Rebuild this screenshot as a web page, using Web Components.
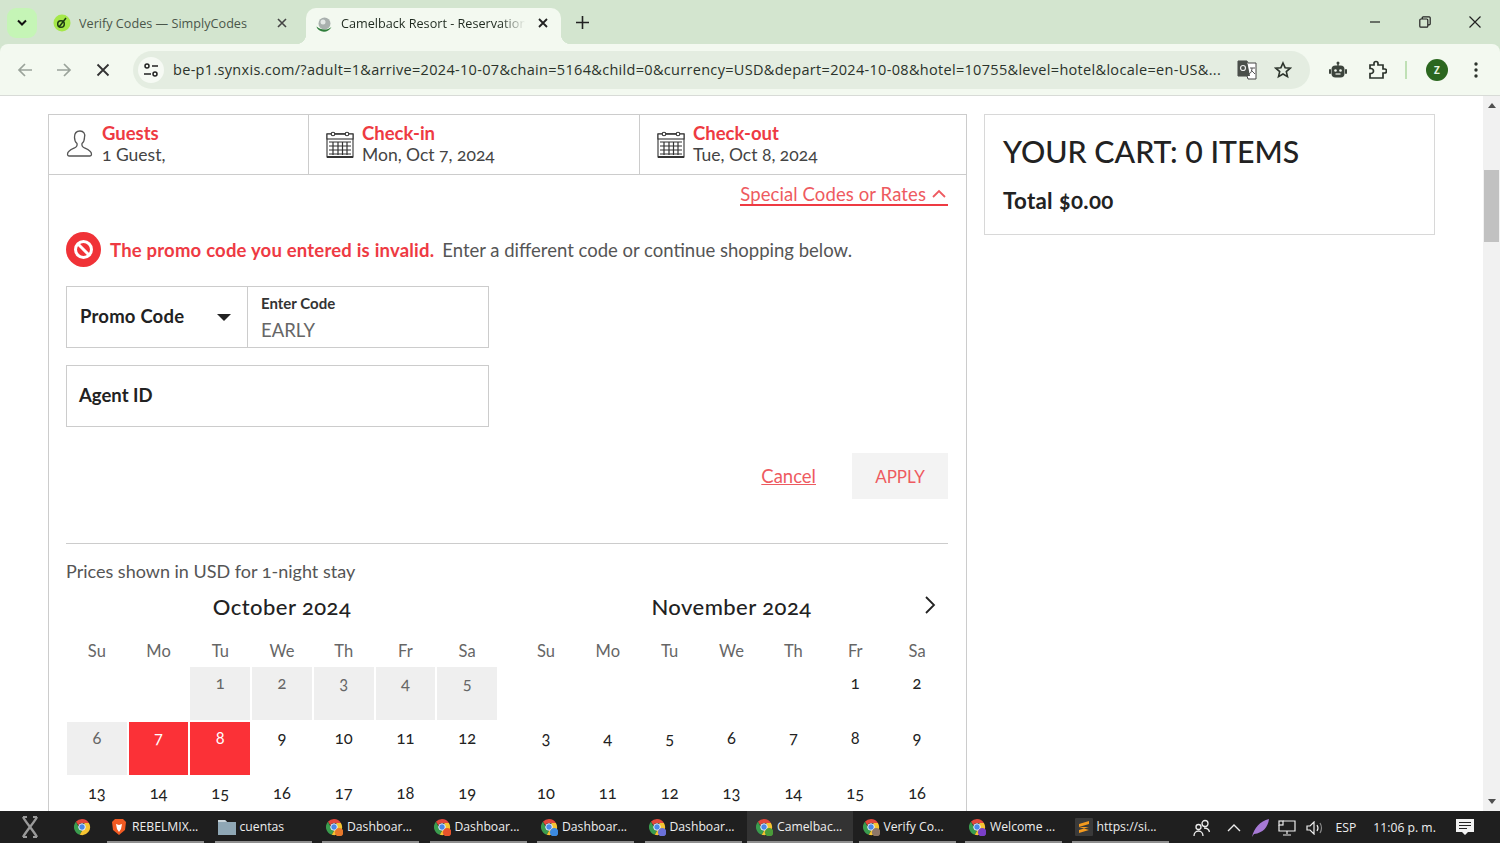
<!DOCTYPE html>
<html lang="en">
<head>
<meta charset="utf-8">
<title>Camelback Resort - Reservation</title>
<style>
    html,body{margin:0;padding:0;height:100%;overflow:hidden;background:#fff;}
    body{display:flex;flex-direction:column;width:1500px;height:843px;font-family:"Lato","Liberation Sans",sans-serif;}
</style>
</head>
<body>
<x-tabstrip></x-tabstrip>
<x-toolbar></x-toolbar>
<x-viewport>
    <x-booking-panel>
        <x-search-bar></x-search-bar>
        <x-promo-form></x-promo-form>
        <x-hotel-calendar></x-hotel-calendar>
    </x-booking-panel>
    <x-cart slot="side"></x-cart>
</x-viewport>
<x-taskbar></x-taskbar>

<script>
const RED='#ee3a43';
const raleway=`font-family:"Lato","Open Sans",sans-serif;font-variant-numeric:oldstyle-nums;font-feature-settings:"onum";`;
const ui=`font-family:"Open Sans","Noto Sans",sans-serif;`;

function chromeIcon(badge,size=18){
    const b=badge?`<circle cx="14.2" cy="14.2" r="4.3" fill="${badge}"/>`:'';
    return `<svg width="${size}" height="${size}" viewBox="0 0 18 18">
        <path d="M9 1a8 8 0 0 1 6.93 4H9a4 4 0 0 0-3.6 2.3L2.9 3.8A8 8 0 0 1 9 1z" fill="#e3483c"/>
        <path d="M2.9 3.8l3.5 6.1A4 4 0 0 0 9 13l-2.3 3.7A8 8 0 0 1 2.9 3.8z" fill="#3a9c4e"/>
        <path d="M15.93 5A8 8 0 0 1 6.7 16.7L10.2 11a4 4 0 0 0 .8-5.9z" fill="#f6c432"/>
        <circle cx="9" cy="9" r="3.3" fill="#4a88e8" stroke="#fff" stroke-width=".9"/>${b}
    </svg>`;
}

const calendarSvg=`<svg width="28" height="28" viewBox="0 0 28 28" fill="none" stroke="#333" stroke-width="1.1">
    <rect x="1" y="4" width="26" height="23" fill="#fff"/>
    <rect x="1" y="4" width="26" height="5" fill="#fff"/>
    <circle cx="7" cy="4" r="1.8" fill="#fff"/><circle cx="21" cy="4" r="1.8" fill="#fff"/>
    <path d="M8.8 4h10.400"/>
    <path d="M3 12h22M3 16h22M3 20h22M3 24h22M7 12v13M12 12v13M16.500 12v13M21 12v13" stroke-width="1.2"/>
    <path d="M1 27h26" stroke-width="2"/>
</svg>`;

class XTabstrip extends HTMLElement{
    constructor(){
        super();
        this.attachShadow({mode:'open'});
        this.shadowRoot.innerHTML=`
        <style>
            :host{display:flex;height:44px;background:#d3e5cf;flex:none;color:#1f2a1f;${ui}font-size:12.650px;}
            .drop{width:30px;height:30px;margin:8px 0 0 7px;background:#c5f5b6;border-radius:9px;display:flex;align-items:center;justify-content:center;flex:none;}
            .tab{display:flex;align-items:center;height:36px;margin-top:8px;box-sizing:border-box;padding-bottom:6px;flex:none;position:relative;}
            .tab.off{width:269px;padding-left:16px;color:#4a564a;}
            .tab.on{width:255px;background:#f3f9f0;border-radius:10px 10px 0 0;padding-left:9px;}
            .tab.on::before,.tab.on::after{content:"";position:absolute;bottom:0;width:10px;height:10px;}
            .tab.on::before{left:-10px;background:radial-gradient(circle at 0 0,transparent 10px,#f3f9f0 10.500px);}
            .tab.on::after{right:-10px;background:radial-gradient(circle at 100% 0,transparent 10px,#f3f9f0 10.500px);}
            .fav{width:18px;height:18px;flex:none;margin-right:8px;display:block;}
            .on .fav{margin-top:3px;}
            .title{flex:1;white-space:nowrap;overflow:hidden;}
            .on .title{-webkit-mask-image:linear-gradient(90deg,#000 84%,transparent 97%);mask-image:linear-gradient(90deg,#000 84%,transparent 97%);}
            .x{flex:none;width:12px;height:12px;margin:0 12px 0 6px;display:block;}
            .off .x{margin:0 18px 0 14px;}
            .plus{margin:16px 0 0 15px;width:13px;height:13px;display:block;flex:none;}
            .win{margin-left:auto;display:flex;}
            .win div{width:50px;height:44px;display:flex;align-items:center;justify-content:center;}
        </style>
        <div class="drop"><svg width="12" height="8" viewBox="0 0 12 8" fill="none" stroke="#111" stroke-width="2"><path d="M2 1.500l4 4 4-4"/></svg></div>
        <div class="tab off">
            <svg class="fav" viewBox="0 0 18 18"><circle cx="9" cy="9" r="8.500" fill="#a5e84a"/><circle cx="8" cy="10" r="3.300" fill="none" stroke="#1c3a12" stroke-width="1.500"/><path d="M6 13l7-9" stroke="#1c3a12" stroke-width="1.500"/></svg>
            <div class="title">Verify Codes — SimplyCodes</div>
            <svg class="x" viewBox="0 0 12 12" stroke="#444" stroke-width="1.600"><path d="M2 2l8 8M10 2l-8 8"/></svg>
        </div>
        <div class="tab on">
            <svg class="fav" viewBox="0 0 18 18"><circle cx="9.500" cy="7.500" r="6" fill="#a9b0ae"/><circle cx="8" cy="6" r="2.500" fill="#e4e8e6"/><path d="M1.500 10.500c1.500 6 11.500 7.500 15 .5-4 3.500-11 3.500-15-.5z" fill="#2e7d3a"/></svg>
            <div class="title">Camelback Resort - Reservation</div>
            <svg class="x" viewBox="0 0 12 12" stroke="#222" stroke-width="1.800"><path d="M2 2l8 8M10 2l-8 8"/></svg>
        </div>
        <svg class="plus" viewBox="0 0 13 13" stroke="#222" stroke-width="1.600"><path d="M6.500 0v13M0 6.500h13"/></svg>
        <div class="win">
            <div><svg width="12" height="12" viewBox="0 0 12 12" stroke="#222" stroke-width="1.200"><path d="M1 6h10"/></svg></div>
            <div><svg width="12" height="12" viewBox="0 0 12 12" fill="none" stroke="#222" stroke-width="1.200"><rect x=".8" y="3" width="8" height="8.200" rx="1"/><path d="M3.200 3V1.800q0-1 1-1h6q1 0 1 1v6q0 1-1 1H9"/></svg></div>
            <div><svg width="14" height="14" viewBox="0 0 14 14" stroke="#222" stroke-width="1.200"><path d="M1.500 1.500l11 11M12.500 1.500l-11 11"/></svg></div>
        </div>`;
    }
}

class XToolbar extends HTMLElement{
    constructor(){
        super();
        this.attachShadow({mode:'open'});
        this.shadowRoot.innerHTML=`
        <style>
            :host{display:flex;align-items:center;height:52px;flex:none;background:#d3e5cf;${ui}}
            .bar{flex:1;height:51px;background:#f3f9f0;border-radius:8px 8px 0 0;border-bottom:1px solid #d8dbd7;display:flex;align-items:center;box-sizing:content-box;}
            .nav{width:39px;display:flex;justify-content:center;flex:none;}
            .omni{width:1177px;height:38px;margin-left:11px;background:#e4ede1;border-radius:19px;display:flex;align-items:center;flex:none;}
            .chip{width:26px;height:26px;border-radius:50%;background:#f6faf4;margin-left:5px;flex:none;display:flex;align-items:center;justify-content:center;}
            .url{margin-left:9px;width:1048px;font-size:14.500px;color:#2b332b;white-space:nowrap;overflow:hidden;letter-spacing:.31px;}
            .translate{margin-left:16px;flex:none;}
            .star{margin-left:17px;flex:none;}
            .ext{display:flex;align-items:center;margin-left:16px;}
            .sep{width:2px;height:18px;background:#bfe0b5;margin:0 19px 0 18px;}
            .avatar{width:22px;height:22px;border-radius:50%;background:#2b671f;color:#e8f5e4;font-size:10px;font-weight:700;display:flex;align-items:center;justify-content:center;}
        </style>
        <div class="bar">
            <div class="nav" style="margin-left:5px"><svg width="16" height="16" viewBox="0 0 16 16" fill="none" stroke="#9aa39a" stroke-width="1.700"><path d="M15 8H2M8 2L2 8l6 6"/></svg></div>
            <div class="nav"><svg width="16" height="16" viewBox="0 0 16 16" fill="none" stroke="#9aa39a" stroke-width="1.700"><path d="M1 8h13M8 2l6 6-6 6"/></svg></div>
            <div class="nav"><svg width="14" height="14" viewBox="0 0 14 14" stroke="#333" stroke-width="1.800"><path d="M1.500 1.500l11 11M12.500 1.500l-11 11"/></svg></div>
            <div class="omni">
                <div class="chip"><svg width="16" height="16" viewBox="0 0 16 16" fill="none" stroke="#222" stroke-width="1.500"><circle cx="4" cy="4" r="2"/><path d="M9 4h6M1 12h7"/><circle cx="12" cy="12" r="2"/></svg></div>
                <div class="url">be-p1.synxis.com/?adult=1&amp;arrive=2024-10-07&amp;chain=5164&amp;child=0&amp;currency=USD&amp;depart=2024-10-08&amp;hotel=10755&amp;level=hotel&amp;locale=en-US&amp;...</div>
                <svg class="translate" width="20" height="20" viewBox="0 0 20 20"><path d="M1 1h9l1 2h8v16h-8l-1-3H1z" fill="#fff" stroke="#444" stroke-width="1"/><path d="M1 1h9l3 15H1z" fill="#4a4f4a"/><circle cx="6" cy="8" r="2.500" fill="none" stroke="#eee" stroke-width="1.200"/><path d="M13 8h5M15 8c0 3-1 5-3 6M14 10l4 4" stroke="#555" fill="none"/></svg>
                <svg class="star" width="18" height="18" viewBox="0 0 18 18" fill="none" stroke="#2c342c" stroke-width="1.600"><path d="M9 2l2.100 4.700 5.100.5-3.900 3.400 1.200 5L9 13l-4.500 2.600 1.200-5L1.800 7.200l5.100-.5z"/></svg>
            </div>
            <div class="ext">
                <svg width="18" height="18" viewBox="0 0 18 18" style="margin-left:3px"><circle cx="9" cy="2" r="1.500" fill="#3c443c"/><path d="M8.300 2h1.400v3H8.300z" fill="#3c443c"/><rect x="2.500" y="4.500" width="13" height="12" rx="4" fill="#3c443c"/><rect y="8" width="2" height="5" rx="1" fill="#3c443c"/><rect x="16" y="8" width="2" height="5" rx="1" fill="#3c443c"/><circle cx="6.500" cy="9.500" r="1.300" fill="#f3f9f0"/><circle cx="11.500" cy="9.500" r="1.300" fill="#f3f9f0"/><path d="M6.500 13h5" stroke="#f3f9f0" stroke-width="1.200"/></svg>
                <svg width="20" height="20" viewBox="0 0 20 20" fill="none" stroke="#2c342c" stroke-width="1.700" style="margin-left:20px"><path d="M3 5h4V3.500a2 2 0 0 1 4 0V5h5v4h1.500a2 2 0 0 1 0 4H16v5H3v-4.500h1a2.500 2.500 0 0 0 0-5H3z"/></svg>
                <div class="sep"></div>
                <div class="avatar">Z</div>
                <svg width="4" height="16" viewBox="0 0 4 16" fill="#2c342c" style="margin-left:26px"><circle cx="2" cy="2" r="1.700"/><circle cx="2" cy="8" r="1.700"/><circle cx="2" cy="14" r="1.700"/></svg>
            </div>
        </div>`;
    }
}

class XViewport extends HTMLElement{
    constructor(){
        super();
        this.attachShadow({mode:'open'});
        this.shadowRoot.innerHTML=`
        <style>
            :host{display:flex;flex:1;min-height:0;overflow:hidden;background:#fff;}
            .page{flex:1;display:flex;align-items:stretch;padding:18px 48px 0 48px;min-width:0;}
            .side{margin-left:17px;width:451px;flex:none;}
            .scroll{width:17px;flex:none;background:#f1f1f1;display:flex;flex-direction:column;align-items:center;}
            .thumb{width:15px;height:72px;background:#c1c1c1;margin-top:62px;}
            .arrow{width:0;height:0;border-left:4px solid transparent;border-right:4px solid transparent;}
            .up{border-bottom:5px solid #505050;margin-top:7px;}
            .down{border-top:5px solid #505050;margin-top:auto;margin-bottom:7px;}
        </style>
        <div class="page"><slot></slot><div class="side"><slot name="side"></slot></div></div>
        <div class="scroll"><div class="arrow up"></div><div class="thumb"></div><div class="arrow down"></div></div>`;
    }
}

class XBookingPanel extends HTMLElement{
    constructor(){
        super();
        this.attachShadow({mode:'open'});
        this.shadowRoot.innerHTML=`
        <style>
            :host{display:block;width:919px;flex:none;box-sizing:border-box;border:1px solid #ccc;border-bottom:0;overflow:hidden;}
        </style>
        <slot></slot>`;
    }
}

class XSearchBar extends HTMLElement{
    constructor(){
        super();
        this.attachShadow({mode:'open'});
        const item=(w,icon,label,value)=>`
            <div class="cell" style="width:${w}px">${icon}
                <div class="txt"><div class="lbl">${label}</div><div class="val">${value}</div></div>
            </div>`;
        const person=`<svg width="28" height="28" viewBox="0 0 28 28" fill="none" stroke="#555" stroke-width="1.300"><path d="M14 1c-3.600 0-5.500 2.800-5.500 6.200 0 2.800 1 5 2.500 6.300.5 2-.5 3.600-3 4.700-3.500 1.500-6.500 3-6.500 6 0 1.200.6 1.800 1.500 1.800h21c.9 0 1.500-.6 1.500-1.800 0-3-3-4.500-6.500-6-2.500-1.100-3.500-2.700-3-4.700 1.500-1.300 2.500-3.500 2.500-6.300C19.500 3.800 17.600 1 14 1z"/></svg>`;
        this.shadowRoot.innerHTML=`
        <style>
            :host{display:flex;height:60px;box-sizing:border-box;border-bottom:1px solid #ccc;${raleway}}
            .cell{display:flex;align-items:center;box-sizing:border-box;border-right:1px solid #ccc;padding:0 0 2px 17px;}
            .cell:last-child{border-right:0;}
            svg{flex:none;margin-right:8px;}
            .cell:first-child svg{margin-right:6px;}
            .lbl{font-size:18.500px;font-weight:700;color:${RED};line-height:21px;}
            .val{font-size:17.500px;color:#444;line-height:21px;}
        </style>
        ${item(260,person,'Guests','1 Guest,')}
        ${item(331,calendarSvg,'Check-in','Mon, Oct 7, 2024')}
        ${item(326,calendarSvg,'Check-out','Tue, Oct 8, 2024')}`;
    }
}

class XPromoForm extends HTMLElement{
    constructor(){
        super();
        this.attachShadow({mode:'open'});
        this.shadowRoot.innerHTML=`
        <style>
            :host{display:block;padding:0 18px 0 17px;${raleway}}
            .toggle{display:flex;justify-content:flex-end;}
            .toggle a{display:flex;align-items:center;font-size:18.500px;letter-spacing:.1px;color:#ee5a60;height:31px;box-sizing:border-box;border-bottom:2px solid ${RED};padding-top:9px;padding-bottom:0;}
            .toggle svg{margin:0 2px 2px 6px;}
            .error{display:flex;align-items:center;margin-top:26px;font-size:18.500px;}
            .error svg{flex:none;margin-right:9px;}
            .error b{color:${RED};font-weight:700;margin-right:8px;letter-spacing:.2px;}
            .error span{color:#555;}
            .box{width:423px;height:62px;box-sizing:border-box;border:1px solid #ccc;display:flex;}
            .promo{margin-top:19px;}
            .sel{width:181px;flex:none;box-sizing:border-box;border-right:1px solid #ccc;display:flex;align-items:center;justify-content:space-between;padding:0 16px 2px 13px;font-size:18.500px;font-weight:700;color:#222;letter-spacing:.2px;}
            .tri{width:0;height:0;border-left:7px solid transparent;border-right:7px solid transparent;border-top:7px solid #222;margin-top:2px;}
            .code{padding:7px 0 0 13px;}
            .code small{display:block;font-size:15px;font-weight:700;color:#333;line-height:18px;}
            .code div{font-size:18.500px;color:#666;line-height:24px;margin-top:6px;}
            .agent{margin-top:17px;align-items:center;padding:0 0 2px 12px;font-size:18.500px;font-weight:700;color:#222;}
            .actions{display:flex;justify-content:flex-end;align-items:center;margin-top:26px;}
            .cancel{font-size:18.500px;color:#ee5a60;text-decoration:underline;margin-right:36px;}
            .apply{width:96px;height:46px;background:#f3f3f3;color:#ee5a60;font-size:17px;display:flex;align-items:center;justify-content:center;}
            hr{border:0;border-top:1px solid #ccc;margin:44px 0 0;}
        </style>
        <div class="toggle"><a>Special Codes or Rates<svg width="14" height="9" viewBox="0 0 14 9" fill="none" stroke="#ee5a60" stroke-width="1.800"><path d="M1 8l6-6 6 6"/></svg></a></div>
        <div class="error">
            <svg width="35" height="35" viewBox="0 0 35 35"><circle cx="17.500" cy="17.500" r="17.500" fill="#f03237"/><circle cx="17.500" cy="17.500" r="8" fill="none" stroke="#fff" stroke-width="3"/><path d="M12 12l11 11" stroke="#fff" stroke-width="3"/></svg>
            <b>The promo code you entered is invalid.</b><span>Enter a different code or continue shopping below.</span>
        </div>
        <div class="box promo">
            <div class="sel">Promo Code<i class="tri"></i></div>
            <div class="code"><small>Enter Code</small><div>EARLY</div></div>
        </div>
        <div class="box agent">Agent ID</div>
        <div class="actions"><a class="cancel">Cancel</a><div class="apply">APPLY</div></div>
        <hr>`;
    }
}

class XMonth extends HTMLElement{
    constructor(){
        super();
        this.attachShadow({mode:'open'});
        const offset=+this.dataset.offset||0, last=+this.dataset.last;
        const past=+this.dataset.past||0, sel=(this.dataset.selected||'').split(',').map(Number);
        let cells='';
        for(let i=0;i<offset;i++) cells+='<div class="d"></div>';
        for(let d=1;d<=last;d++){
            const cls=sel.includes(d)?'sel':d<=past?'past':'';
            cells+=`<div class="d ${cls}">${d}</div>`;
        }
        const dow=['Su','Mo','Tu','We','Th','Fr','Sa'].map(x=>`<div>${x}</div>`).join('');
        this.shadowRoot.innerHTML=`
        <style>
            :host{display:block;flex:none;${raleway}}
            .title{text-align:center;font-size:22px;font-weight:500;letter-spacing:.45px;color:#222;line-height:28px;}
            .dow{display:grid;grid-template-columns:repeat(7,1fr);gap:0 2px;margin-top:19px;height:27px;text-align:center;font-size:16.500px;color:#666;line-height:23px;}
            .days{display:grid;grid-template-columns:repeat(7,1fr);grid-auto-rows:53px;gap:2px;text-align:center;font-size:16.500px;color:#222;}
            .d{padding-top:6px;line-height:20px;box-sizing:border-box;}
            .past{background:#efefef;color:#666;}
            .sel{background:#fb3137;color:#fff;}
        </style>
        <div class="title">${this.dataset.title}</div>
        <div class="dow">${dow}</div>
        <div class="days">${cells}</div>`;
    }
}

class XHotelCalendar extends HTMLElement{
    constructor(){
        super();
        this.attachShadow({mode:'open'});
        this.shadowRoot.innerHTML=`
        <style>
            :host{display:block;padding:15px 0 0 18px;${raleway}}
            .note{font-size:18px;color:#555;line-height:24px;margin-left:-1px;}
            .months{display:flex;gap:19px;margin-top:10px;align-items:flex-start;}
            .next{margin:2px 0 0 -42px;width:12px;flex:none;}
        </style>
        <div class="note">Prices shown in USD for 1-night stay</div>
        <div class="months">
            <x-month style="width:430px" data-title="October 2024" data-offset="2" data-last="19" data-past="6" data-selected="7,8"></x-month>
            <x-month style="width:431px" data-title="November 2024" data-offset="5" data-last="16"></x-month>
            <svg class="next" width="12" height="20" viewBox="0 0 12 20" fill="none" stroke="#222" stroke-width="1.800"><path d="M2 2l8 8-8 8"/></svg>
        </div>`;
    }
}

class XCart extends HTMLElement{
    constructor(){
        super();
        this.attachShadow({mode:'open'});
        this.shadowRoot.innerHTML=`
        <style>
            :host{display:block;height:121px;box-sizing:border-box;border:1px solid #d8d8d8;padding:16px 18px;${raleway}}
            .h{font-size:30.300px;font-weight:500;color:#222;line-height:40px;white-space:nowrap;font-variant-numeric:lining-nums;font-feature-settings:"lnum";}
            .t{font-size:22.300px;font-weight:700;color:#222;margin-top:17px;line-height:26px;letter-spacing:.3px;}
        </style>
        <div class="h">YOUR CART: 0 ITEMS</div>
        <div class="t">Total $0.00</div>`;
    }
}

class XTaskItem extends HTMLElement{
    constructor(){
        super();
        this.attachShadow({mode:'open'});
        this.shadowRoot.innerHTML=`
        <style>
            :host{display:flex;align-items:center;width:97px;height:32px;flex:none;box-sizing:border-box;padding:1px 0 0 3px;border-bottom:2px solid #8f8f8f;color:#eee;font-size:12.200px;white-space:nowrap;gap:4px;}
            :host([active]){background:#333;width:106px;margin:0 -4px 0 -5px;padding-left:8px;}
            ::slotted(svg){flex:none;}
        </style>
        <slot name="icon"></slot><slot></slot>`;
    }
}

class XTaskbar extends HTMLElement{
    constructor(){
        super();
        this.attachShadow({mode:'open'});
        const brave=`<svg slot="icon" width="18" height="18" viewBox="0 0 18 18"><path d="M5 1h8l3 3-1 8-6 5-6-5-1-8z" fill="#f15a22"/><path d="M6 6l3 1 3-1-1 5-2 3-2-3z" fill="#fff"/></svg>`;
        const folder=`<svg slot="icon" width="18" height="18" viewBox="0 0 18 18"><path d="M0 2h7l2 2h9v13H0z" fill="#8fa7b5"/><path d="M0 2h7l2 2H0z" fill="#c9d4da"/></svg>`;
        const sublime=`<svg slot="icon" width="18" height="18" viewBox="0 0 18 18"><rect width="18" height="18" rx="1" fill="#3a3a3a"/><path d="M4 6l10-3v3L4 9zM4 9l10 3v-3zM4 12l10-3v3L4 15z" fill="#f39a1e"/></svg>`;
        const items=[
            [brave,'REBELMIX...'],[folder,'cuentas'],
            [chromeIcon('#e8782b'),'Dashboar...'],[chromeIcon('#e8532b'),'Dashboar...'],
            [chromeIcon('#3c8ae0'),'Dashboar...'],[chromeIcon('#6a70d8'),'Dashboar...'],
            [chromeIcon('#4a9c3a'),'Camelbac...',1],[chromeIcon('#8d7768'),'Verify Co...'],
            [chromeIcon('#7a3fc8'),'Welcome ...'],[sublime,'https://si...']
        ].map(([ic,t,a])=>{
            const icon=ic.startsWith('<svg slot')?ic:ic.replace('<svg','<svg slot="icon"');
            return `<x-task-item ${a?'active':''}>${icon}${t}</x-task-item>`;
        }).join('');
        this.shadowRoot.innerHTML=`
        <style>
            :host{display:flex;align-items:center;height:32px;flex:none;background:#1f1f1f;color:#eee;${ui}font-size:12.200px;}
            .logo{width:60px;display:flex;justify-content:center;flex:none;}
            .pin{width:44px;margin-right:3px;display:flex;justify-content:center;flex:none;}
            .items{display:flex;gap:10.500px;flex:none;}
            .items x-task-item:nth-child(n+8){margin-left:-1px;}
            .tray{display:flex;align-items:center;margin-left:24px;flex:none;padding-top:1px;}
            .tray span{white-space:nowrap;}
        </style>
        <div class="logo"><svg width="18" height="22" viewBox="0 0 18 22" fill="none" stroke="#9a9a9a" stroke-width="2.400"><path d="M2 1c4 7 10 13 14 20M16 1C12 8 6 14 2 21"/><path d="M2 1h4M12 21h4M12 1h4M2 21h4" stroke-width="2"/></svg></div>
        <div class="pin">${chromeIcon(null)}</div>
        <div class="items">${items}</div>
        <div class="tray">
            <svg width="18" height="18" viewBox="0 0 18 18" fill="none" stroke="#eee" stroke-width="1.300"><circle cx="12" cy="4.500" r="3"/><circle cx="5.500" cy="8" r="2.500"/><path d="M1 17c0-3 2-5 4.500-5S10 14 10 17M11 9c3 0 5 1.500 5.500 4"/></svg>
            <svg width="14" height="9" viewBox="0 0 14 9" fill="none" stroke="#eee" stroke-width="1.400" style="margin-left:16px"><path d="M1 8l6-6 6 6"/></svg>
            <svg width="17" height="18" viewBox="0 0 17 18" style="margin-left:11px"><path d="M0 18C2 9 8 2 17 0c-1 8-6 14-15 15z" fill="#a779d6"/></svg>
            <svg width="18" height="16" viewBox="0 0 18 16" fill="none" stroke="#eee" stroke-width="1.200" style="margin-left:9px"><path d="M5 1h12v10H1V5M9 11v3M5 15h8"/><rect x="1" y="1" width="4" height="4"/></svg>
            <svg width="18" height="14" viewBox="0 0 18 14" fill="none" stroke="#eee" stroke-width="1.200" style="margin-left:10px"><path d="M1 5h3l4-4v12l-4-4H1z"/><path d="M11 4q2 3 0 6" /><path d="M14 2q3 5 0 10" stroke="#888"/></svg>
            <span style="margin-left:12px">ESP</span>
            <span style="margin-left:17px">11:06 p. m.</span>
            <svg width="18" height="17" viewBox="0 0 18 17" style="margin-left:20px"><path d="M0 0h18v13h-6l-3 3-3-3H0z" fill="#f2f2f2"/><path d="M3 3.500h12M3 6.500h12M3 9.500h8" stroke="#222" stroke-width="1.100"/></svg>
        </div>`;
    }
}

customElements.define('x-tabstrip',XTabstrip);
customElements.define('x-toolbar',XToolbar);
customElements.define('x-viewport',XViewport);
customElements.define('x-booking-panel',XBookingPanel);
customElements.define('x-search-bar',XSearchBar);
customElements.define('x-promo-form',XPromoForm);
customElements.define('x-month',XMonth);
customElements.define('x-hotel-calendar',XHotelCalendar);
customElements.define('x-cart',XCart);
customElements.define('x-task-item',XTaskItem);
customElements.define('x-taskbar',XTaskbar);
</script>
</body>
</html>
